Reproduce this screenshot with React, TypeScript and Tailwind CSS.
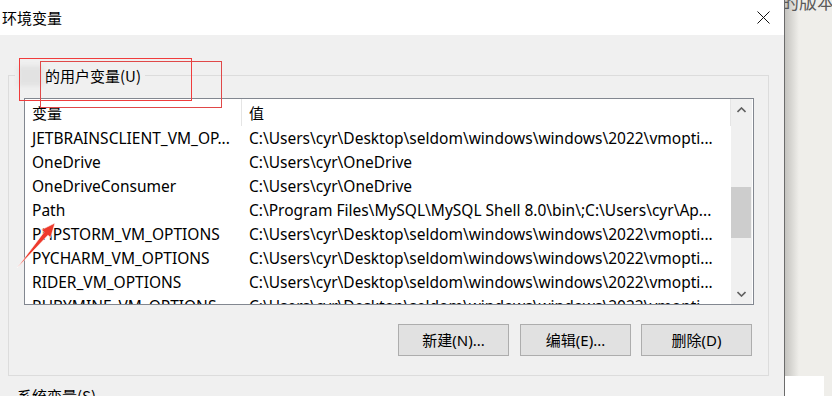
const rows: [string, string][] = [
  ["JETBRAINSCLIENT_VM_OP...", "C:\\Users\\cyr\\Desktop\\seldom\\windows\\windows\\2022\\vmopti..."],
  ["OneDrive", "C:\\Users\\cyr\\OneDrive"],
  ["OneDriveConsumer", "C:\\Users\\cyr\\OneDrive"],
  ["Path", "C:\\Program Files\\MySQL\\MySQL Shell 8.0\\bin\\;C:\\Users\\cyr\\Ap..."],
  ["PHPSTORM_VM_OPTIONS", "C:\\Users\\cyr\\Desktop\\seldom\\windows\\windows\\2022\\vmopti..."],
  ["PYCHARM_VM_OPTIONS", "C:\\Users\\cyr\\Desktop\\seldom\\windows\\windows\\2022\\vmopti..."],
  ["RIDER_VM_OPTIONS", "C:\\Users\\cyr\\Desktop\\seldom\\windows\\windows\\2022\\vmopti..."],
  ["RUBYMINE_VM_OPTIONS", "C:\\Users\\cyr\\Desktop\\seldom\\windows\\windows\\2022\\vmopti..."],
];

const Chevron = ({ up }: { up?: boolean }) => (
  <svg width="9" height="6" viewBox="0 0 9 6" className="block">
    <path
      d={up ? "M0.5 5 L4.5 1 L8.5 5" : "M0.5 1 L4.5 5 L8.5 1"}
      fill="none"
      stroke="#606060"
      strokeWidth="1.6"
    />
  </svg>
);

const Btn = ({ label }: { label: string }) => (
  <button className="w-[111px] h-[32px] border border-[#adadad] bg-[#e1e1e1] flex items-center justify-center text-[15px]">
    {label}
  </button>
);

export default function App() {
  return (
    <div className="relative w-[832px] h-[396px] overflow-hidden flex bg-[#efeeea] text-[15.5px] leading-[20px] text-black font-['Noto_Sans','Noto_Sans_CJK_SC',sans-serif]">
      {/* dialog */}
      <div className="w-[785px] h-[396px] shrink-0 flex flex-col border-r border-[#6b6b6b] overflow-hidden">
        <div className="h-[35px] shrink-0 bg-white flex items-center justify-between pl-[2px] pr-[14px]">
          <span className="text-[15px] font-['Noto_Sans_CJK_SC',sans-serif]">环境变量</span>
          <svg width="13" height="13" viewBox="0 0 13 13">
            <path d="M0.5 0.5 L12.5 12.5 M12.5 0.5 L0.5 12.5" stroke="#111" strokeWidth="1" />
          </svg>
        </div>

        <div className="flex-1 min-h-0 bg-[#f0f0f0] pt-[40px] pl-[8px] pr-[15px]">
          <div className="relative border border-[#dcdcdc] pl-[15px] pr-[14px] pt-[22px] pb-[19px]">
            {/* legend */}
            <div className="absolute -top-[10px] left-[6px] bg-[#f0f0f0] pl-[3px] pr-[4px] flex items-center">
              <div className="w-[25px] h-[20px] bg-[#e2e2e2] blur-[2px]" />
              <span className="ml-[2px] text-[15px] font-['Noto_Sans_CJK_SC',sans-serif]">的用户变量(U)</span>
            </div>

            {/* list view */}
            <div className="h-[207px] border border-[#828790] bg-white flex overflow-hidden">
              <div className="w-[706px] flex flex-col overflow-hidden">
                <div className="h-[27px] shrink-0 flex border-r border-[#e5e5e5]">
                  <div className="w-[217px] pl-[7px] flex items-center border-r border-[#e5e5e5] text-[15px] font-['Noto_Sans_CJK_SC',sans-serif]">
                    变量
                  </div>
                  <div className="flex-1 pl-[7px] flex items-center text-[15px] font-['Noto_Sans_CJK_SC',sans-serif]">值</div>
                </div>
                {rows.map(([name, value]) => (
                  <div key={name} className="h-[24px] shrink-0 flex items-center whitespace-nowrap">
                    <div className="w-[217px] pl-[7px] overflow-hidden">{name}</div>
                    <div className="flex-1 pl-[7px] overflow-hidden">{value}</div>
                  </div>
                ))}
              </div>
              <div className="w-[21px] bg-[#f0f0f0] flex flex-col">
                <div className="h-[21px] shrink-0 flex items-center justify-center pr-[1px]">
                  <Chevron up />
                </div>
                <div className="flex-1">
                  <div className="mt-[67px] h-[51px] w-[20px] bg-[#cdcdcd]" />
                </div>
                <div className="h-[21px] shrink-0 flex items-center justify-center pr-[1px]">
                  <Chevron />
                </div>
              </div>
            </div>

            <div className="mt-[19px] flex justify-end gap-[10px] pr-[2px]">
              <div className="mr-[1px]">
                <Btn label="新建(N)..." />
              </div>
              <Btn label="编辑(E)..." />
              <Btn label="删除(D)" />
            </div>
          </div>
          <div className="mt-[10px] ml-[9px] text-[15px] font-['Noto_Sans_CJK_SC',sans-serif]">系统变量(S)</div>
        </div>
      </div>

      {/* background window */}
      <div className="flex-1 relative overflow-hidden">
        <div className="absolute inset-y-0 left-0 w-[14px] bg-gradient-to-r from-[#c4c3bf] to-transparent" />
        <div className="absolute -top-[9px] -left-[4px] text-[18px] text-[#5a5a5a] whitespace-nowrap font-['Noto_Sans_CJK_SC',serif]">
          的版本
        </div>
        <div className="absolute bottom-0 left-0 w-[39px] h-[20px] bg-white" />
      </div>

      {/* annotations */}
      <div className="absolute left-[19px] top-[58px] w-[173px] h-[43px] border border-[#f03c3c]" />
      <div className="absolute left-[40px] top-[61px] w-[182px] h-[47px] border border-[#e04848]" />
      <svg className="absolute left-0 top-0" width="832" height="396">
        <polygon
          points="17,268 44.1,232.1 41.4,229.8 55,223 50.6,237.6 47.9,235.3"
          fill="#ee3a2c"
          stroke="#ffffff"
          strokeWidth="0.6"
        />
      </svg>
    </div>
  );
}
